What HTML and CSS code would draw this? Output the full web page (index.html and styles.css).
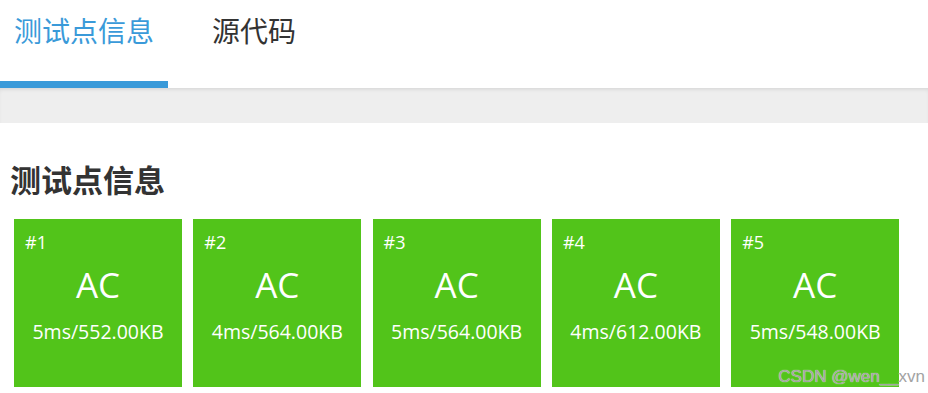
FILE: index.html
```html
<!DOCTYPE html>
<html lang="zh-CN">
<head>
    <meta charset="UTF-8">
    <meta name="viewport" content="width=device-width, initial-scale=1.0">
    <title>测试点信息</title>
    <link rel="stylesheet" href="styles.css">
</head>
<body>
    <div class="tabs">
        <div class="tab active">测试点信息</div>
        <div class="tab">源代码</div>
    </div>
    <div class="band"></div>

    <div class="content">
        <h2>测试点信息</h2>
        <div class="cases">
            <div class="case">
                <div class="case-no">#1</div>
                <div class="case-status">AC</div>
                <div class="case-info">5ms/552.00KB</div>
            </div>
            <div class="case">
                <div class="case-no">#2</div>
                <div class="case-status">AC</div>
                <div class="case-info">4ms/564.00KB</div>
            </div>
            <div class="case">
                <div class="case-no">#3</div>
                <div class="case-status">AC</div>
                <div class="case-info">5ms/564.00KB</div>
            </div>
            <div class="case">
                <div class="case-no">#4</div>
                <div class="case-status">AC</div>
                <div class="case-info">4ms/612.00KB</div>
            </div>
            <div class="case">
                <div class="case-no">#5</div>
                <div class="case-status">AC</div>
                <div class="case-info">5ms/548.00KB</div>
            </div>
        </div>
    </div>

    <div class="watermark">CSDN @wen__xvn</div>
</body>
</html>
```

FILE: styles.css
```css
body { font-family: "Open Sans", "Noto Sans CJK SC", sans-serif; margin: 0; background: #fff; color: #333; position: relative; height: 393px; overflow: hidden; }
.tabs { display: flex; height: 88px; background: #fff; }
.tab { font-size: 28px; line-height: 62px; padding: 0 14px; height: 81px; border-bottom: 7px solid transparent; color: #333; }
.tab + .tab { margin-left: 44px; padding: 0; }
.tab.active { color: #3a9ad9; border-bottom-color: #3a9ad9; }
.band { height: 35px; background: #eeeeee; box-shadow: inset 0 3px 4px -2px rgba(0,0,0,0.12); }
.content { padding: 0 14px; }
h2 { font-size: 31px; font-weight: bold; margin: 36px 0 18px -4px; line-height: 42px; color: #333; }
.cases { display: flex; gap: 11.3px; }
.case { width: 168px; height: 168px; background: #52c41a; color: #fff; box-sizing: border-box; padding: 12px 11px 0; }
.case-no { font-size: 18px; font-weight: 500; line-height: 22px; }
.case-status { font-size: 35px; text-align: center; line-height: 48px; margin-top: 8px; }
.case-info { font-size: 19.5px; text-align: center; line-height: 26px; margin-top: 10px; }
.watermark { position: absolute; right: 3px; bottom: 6px; font-family: "Liberation Sans", Arial, sans-serif; font-size: 17px; color: #a3a3a3; text-shadow: 0 0 1px #fff; }
```
